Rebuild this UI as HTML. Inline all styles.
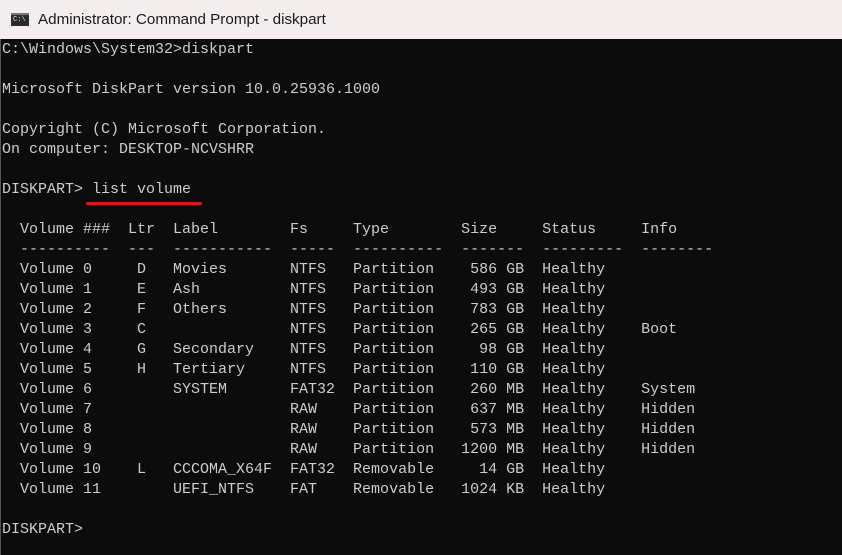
<!DOCTYPE html>
<html><head><style>
html,body{margin:0;padding:0;width:842px;height:555px;overflow:hidden;background:#0c0c0c;}
.title{position:absolute;left:0;top:0;width:842px;height:39px;background:#f3eeed;font-family:"Liberation Sans",sans-serif;font-size:15.2px;color:#1a1a1a;}
.title span{position:absolute;left:38px;top:11px;}
.icon{position:absolute;left:11px;top:13px;width:18px;height:13px;background:#2b2b2b;border-top:2px solid #777;box-sizing:border-box;}
.icon i{position:absolute;left:2px;top:1px;font-style:normal;font-size:7px;color:#ddd;font-family:"Liberation Mono",monospace;}
pre{position:absolute;left:2px;top:40px;margin:0;font-family:"Liberation Mono",monospace;font-size:15px;line-height:20px;color:#cccccc;}
.ul{position:absolute;left:86px;top:202px;width:116px;height:3px;background:#e0141c;border-radius:2px;}
.lb{position:absolute;left:0;top:39px;width:1px;height:516px;background:#555;}
</style></head><body>
<div class="title"><div class="icon"><i>C:\</i></div><span>Administrator: Command Prompt - diskpart</span></div>
<pre>C:\Windows\System32>diskpart

Microsoft DiskPart version 10.0.25936.1000

Copyright (C) Microsoft Corporation.
On computer: DESKTOP-NCVSHRR

DISKPART> list volume

  Volume ###  Ltr  Label        Fs     Type        Size     Status     Info
  ----------  ---  -----------  -----  ----------  -------  ---------  --------
  Volume 0     D   Movies       NTFS   Partition    586 GB  Healthy
  Volume 1     E   Ash          NTFS   Partition    493 GB  Healthy
  Volume 2     F   Others       NTFS   Partition    783 GB  Healthy
  Volume 3     C                NTFS   Partition    265 GB  Healthy    Boot
  Volume 4     G   Secondary    NTFS   Partition     98 GB  Healthy
  Volume 5     H   Tertiary     NTFS   Partition    110 GB  Healthy
  Volume 6         SYSTEM       FAT32  Partition    260 MB  Healthy    System
  Volume 7                      RAW    Partition    637 MB  Healthy    Hidden
  Volume 8                      RAW    Partition    573 MB  Healthy    Hidden
  Volume 9                      RAW    Partition   1200 MB  Healthy    Hidden
  Volume 10    L   CCCOMA_X64F  FAT32  Removable     14 GB  Healthy
  Volume 11        UEFI_NTFS    FAT    Removable   1024 KB  Healthy

DISKPART></pre>
<div class="ul"></div>
<div class="lb"></div>
</body></html>
